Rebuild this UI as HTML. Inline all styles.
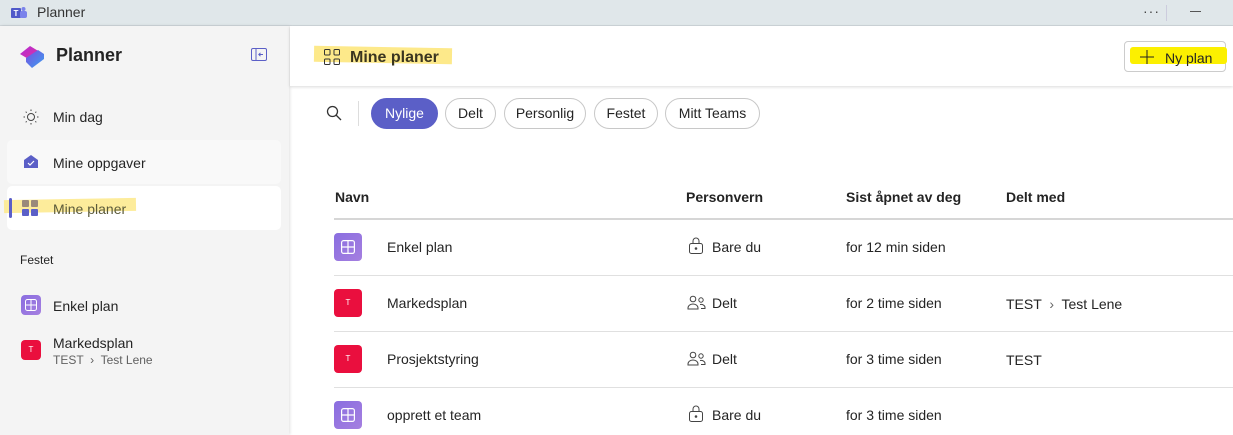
<!DOCTYPE html>
<html><head><meta charset="utf-8"><style>
*{margin:0;padding:0;box-sizing:border-box}
body{width:1233px;height:435px;overflow:hidden;font-family:"Liberation Sans","Segoe UI",sans-serif;background:#fff;position:relative;color:#242424}
.abs{position:absolute}
.tb{left:0;top:0;width:1233px;height:26px;background:#e0e7ea;border-bottom:1px solid #cfd6da}
.side{left:0;top:26px;width:289px;height:409px;background:#f4f4f4;box-shadow:1px 0 3px rgba(0,0,0,.12)}
.hl{background:#fde98a}
.t14{font-size:14px}
.navbox{position:absolute;left:7px;width:274px;height:44px;border-radius:5px}
.chip{position:absolute;top:98px;height:31px;border:1px solid #c8c8c8;border-radius:16px;font-size:14px;line-height:29px;text-align:center;background:#fff}
.row{position:absolute;left:334px;width:899px;height:1px;background:#e0e0e0}
.cell{position:absolute;font-size:14px}
.pi{position:absolute;left:334px;width:28px;height:28px;border-radius:4px}
.pur{background:linear-gradient(135deg,#8a6ee0,#a57fe0)}
.red{background:#ea0f3e;color:#fff;font-size:8px;text-align:center;line-height:28px}
</style></head><body>
<div class="abs tb"></div>
<svg class="abs" style="left:11px;top:5px" width="16" height="16" viewBox="0 0 16 16"><rect x="0" y="3" width="10" height="10" rx="1" fill="#5059c9"/><circle cx="12.5" cy="4" r="2" fill="#7b83eb"/><rect x="9" y="6" width="7" height="7" rx="2" fill="#7b83eb"/><text x="2.5" y="11" font-size="8" fill="#fff" font-family="Liberation Sans" font-weight="bold">T</text></svg>
<div class="abs" style="left:37px;top:4px;font-size:14px;color:#333">Planner</div>
<div class="abs" style="left:1143px;top:3px;font-size:14px;color:#444;letter-spacing:1px">···</div>
<div class="abs" style="left:1166px;top:5px;width:1px;height:16px;background:#ccd"></div>
<div class="abs" style="left:1190px;top:11px;width:11px;height:1px;background:#555"></div>

<div class="abs side"></div>
<svg class="abs" style="left:18px;top:42px" width="28" height="28" viewBox="0 0 28 28"><defs><linearGradient id="g1" x1="0" y1="0" x2="1" y2="1"><stop offset="0" stop-color="#b02ad8"/><stop offset="1" stop-color="#e0359c"/></linearGradient><linearGradient id="g2" x1="0" y1="0" x2="1" y2="1"><stop offset="0" stop-color="#7a4ee0"/><stop offset="1" stop-color="#3aa0f0"/></linearGradient></defs><path d="M2 12 L12 4 L22 10 L12 18Z" fill="url(#g1)"/><path d="M8 16 L20 8 L26 12 L26 17 L14 26 L8 20Z" fill="url(#g2)"/></svg>
<div class="abs" style="left:56px;top:45px;font-size:18px;font-weight:bold;color:#242424">Planner</div>
<svg class="abs" style="left:251px;top:48px" width="16" height="14" viewBox="0 0 16 14"><rect x=".5" y=".5" width="15" height="12" rx="1.5" fill="none" stroke="#5b5fc7"/><line x1="5" y1="1" x2="5" y2="12" stroke="#5b5fc7"/><path d="M12 6.5H8M9.5 4.8L7.8 6.5L9.5 8.2" stroke="#5b5fc7" fill="none"/></svg>

<svg class="abs" style="left:22px;top:108px" width="18" height="18" viewBox="0 0 18 18" stroke="#444" fill="none"><circle cx="9" cy="9" r="3.5"/><path d="M9 1.5v1.5M9 15v1.5M1.5 9H3M15 9h1.5M3.7 3.7l1 1M13.3 13.3l1 1M3.7 14.3l1-1M13.3 4.7l1-1"/></svg>
<div class="abs t14" style="left:53px;top:109px">Min dag</div>
<div class="navbox" style="top:140px;background:#f9f9f9"></div>
<svg class="abs" style="left:23px;top:154px" width="16" height="16" viewBox="0 0 16 16"><path d="M1 6L8 1L15 6V14H1Z" fill="#5b5fc7"/><path d="M5 9l2 2 4-4" stroke="#fff" fill="none" stroke-width="1.2"/></svg>
<div class="abs t14" style="left:53px;top:155px">Mine oppgaver</div>
<div class="navbox" style="top:186px;background:#fff"></div>
<div class="abs hl" style="left:4px;top:199px;width:132px;height:13px;transform:rotate(-1deg);opacity:.85"></div>
<div class="abs" style="left:9px;top:198px;width:3px;height:20px;background:#5b5fc7;border-radius:2px"></div>
<svg class="abs" style="left:22px;top:200px" width="17" height="17" viewBox="0 0 17 17"><rect x="0" y="0" width="7" height="7" rx="1" fill="#9a8a7a"/><rect x="9" y="0" width="7" height="7" rx="1" fill="#9a8a7a"/><rect x="0" y="9" width="7" height="7" rx="1" fill="#5b5fc7"/><rect x="9" y="9" width="7" height="7" rx="1" fill="#5b5fc7"/></svg>
<div class="abs t14" style="left:53px;top:201px;color:#5b5a3a">Mine planer</div>

<div class="abs" style="left:20px;top:253px;font-size:12px">Festet</div>
<div class="abs pur" style="left:21px;top:295px;width:20px;height:20px;border-radius:4px"></div>
<svg class="abs" style="left:25px;top:299px" width="12" height="12" viewBox="0 0 12 12" stroke="#fff" fill="none"><rect x=".5" y=".5" width="11" height="11" rx="2"/><path d="M.5 6h11M6 .5v11"/></svg>
<div class="abs t14" style="left:53px;top:298px">Enkel plan</div>
<div class="abs red" style="left:21px;top:340px;width:20px;height:20px;border-radius:4px;line-height:20px">T</div>
<div class="abs t14" style="left:53px;top:335px">Markedsplan</div>
<div class="abs" style="left:53px;top:353px;font-size:12px;color:#616161">TEST &nbsp;›&nbsp; Test Lene</div>

<div class="abs" style="left:290px;top:26px;width:943px;height:60px;background:#fff;box-shadow:0 1px 3px rgba(0,0,0,.15)"></div>
<div class="abs hl" style="left:314px;top:47px;width:138px;height:16px;transform:rotate(1deg)"></div>
<svg class="abs" style="left:324px;top:49px" width="16" height="16" viewBox="0 0 16 16" fill="none" stroke="#333"><rect x=".5" y=".5" width="5.5" height="5.5" rx="1"/><rect x="10" y=".5" width="5.5" height="5.5" rx="1"/><rect x=".5" y="10" width="5.5" height="5.5" rx="1"/><rect x="10" y="10" width="5.5" height="5.5" rx="1"/></svg>
<div class="abs" style="left:350px;top:49px;font-size:16px;font-weight:bold;color:#3a3520">Mine planer</div>
<div class="abs" style="left:1124px;top:41px;width:102px;height:31px;border:1px solid #ccc;border-radius:4px;background:#fff"></div>
<div class="abs" style="left:1130px;top:47px;width:97px;height:17px;background:#fcf000;border-radius:3px"></div>
<svg class="abs" style="left:1139px;top:49px" width="16" height="16" viewBox="0 0 16 16" stroke="#222"><path d="M8 1v14M1 8h14"/></svg>
<div class="abs t14" style="left:1165px;top:50px">Ny plan</div>

<svg class="abs" style="left:326px;top:105px" width="16" height="16" viewBox="0 0 16 16" fill="none" stroke="#333" stroke-width="1.3"><circle cx="6.5" cy="6.5" r="5"/><path d="M10 10l5 5"/></svg>
<div class="abs" style="left:358px;top:101px;width:1px;height:25px;background:#ddd"></div>
<div class="chip" style="left:371px;width:67px;background:#5b5fc7;border-color:#5b5fc7;color:#fff">Nylige</div>
<div class="chip" style="left:445px;width:51px">Delt</div>
<div class="chip" style="left:504px;width:82px">Personlig</div>
<div class="chip" style="left:594px;width:64px">Festet</div>
<div class="chip" style="left:665px;width:95px">Mitt Teams</div>

<div class="cell" style="left:335px;top:189px;font-weight:bold">Navn</div>
<div class="cell" style="left:686px;top:189px;font-weight:bold">Personvern</div>
<div class="cell" style="left:846px;top:189px;font-weight:bold">Sist åpnet av deg</div>
<div class="cell" style="left:1006px;top:189px;font-weight:bold">Delt med</div>
<div class="row" style="top:218px;height:2px;background:#d6d6d6"></div>
<div class="row" style="top:275px"></div>
<div class="row" style="top:331px"></div>
<div class="row" style="top:387px"></div>

<div class="pi pur" style="top:233px"></div>
<svg class="abs" style="left:341px;top:240px" width="14" height="14" viewBox="0 0 14 14" stroke="#fff" fill="none" stroke-width="1.2"><rect x=".6" y=".6" width="12.8" height="12.8" rx="2"/><path d="M.6 7h12.8M7 .6v12.8"/></svg>
<div class="pi red" style="top:289px">T</div>
<div class="pi red" style="top:345px">T</div>
<div class="pi pur" style="top:401px"></div>
<svg class="abs" style="left:341px;top:408px" width="14" height="14" viewBox="0 0 14 14" stroke="#fff" fill="none" stroke-width="1.2"><rect x=".6" y=".6" width="12.8" height="12.8" rx="2"/><path d="M.6 7h12.8M7 .6v12.8"/></svg>

<div class="cell" style="left:387px;top:239px">Enkel plan</div>
<div class="cell" style="left:387px;top:295px">Markedsplan</div>
<div class="cell" style="left:387px;top:351px">Prosjektstyring</div>
<div class="cell" style="left:387px;top:407px">opprett et team</div>

<svg class="abs" style="left:688px;top:237px" width="16" height="18" viewBox="0 0 16 18" fill="none" stroke="#444"><rect x="1.5" y="6.5" width="13" height="10" rx="2"/><path d="M5 6.5V4a3 3 0 0 1 6 0v2.5"/><circle cx="8" cy="11.5" r=".8" fill="#444"/></svg>
<div class="cell" style="left:712px;top:239px">Bare du</div>
<svg class="abs" style="left:687px;top:295px" width="19" height="16" viewBox="0 0 19 16" fill="none" stroke="#444"><circle cx="6" cy="4" r="2.8"/><path d="M1 13a5 4 0 0 1 10 0v1H1z"/><circle cx="14" cy="5" r="2.2"/><path d="M13 9.5a4 3 0 0 1 5 3v1h-4"/></svg>
<div class="cell" style="left:712px;top:295px">Delt</div>
<svg class="abs" style="left:687px;top:351px" width="19" height="16" viewBox="0 0 19 16" fill="none" stroke="#444"><circle cx="6" cy="4" r="2.8"/><path d="M1 13a5 4 0 0 1 10 0v1H1z"/><circle cx="14" cy="5" r="2.2"/><path d="M13 9.5a4 3 0 0 1 5 3v1h-4"/></svg>
<div class="cell" style="left:712px;top:351px">Delt</div>
<svg class="abs" style="left:688px;top:405px" width="16" height="18" viewBox="0 0 16 18" fill="none" stroke="#444"><rect x="1.5" y="6.5" width="13" height="10" rx="2"/><path d="M5 6.5V4a3 3 0 0 1 6 0v2.5"/><circle cx="8" cy="11.5" r=".8" fill="#444"/></svg>
<div class="cell" style="left:712px;top:407px">Bare du</div>

<div class="cell" style="left:846px;top:239px">for 12 min siden</div>
<div class="cell" style="left:846px;top:295px">for 2 time siden</div>
<div class="cell" style="left:846px;top:351px">for 3 time siden</div>
<div class="cell" style="left:846px;top:407px">for 3 time siden</div>
<div class="cell" style="left:1006px;top:296px">TEST &nbsp;<span style="color:#666">›</span>&nbsp; Test Lene</div>
<div class="cell" style="left:1006px;top:352px">TEST</div>
</body></html>
